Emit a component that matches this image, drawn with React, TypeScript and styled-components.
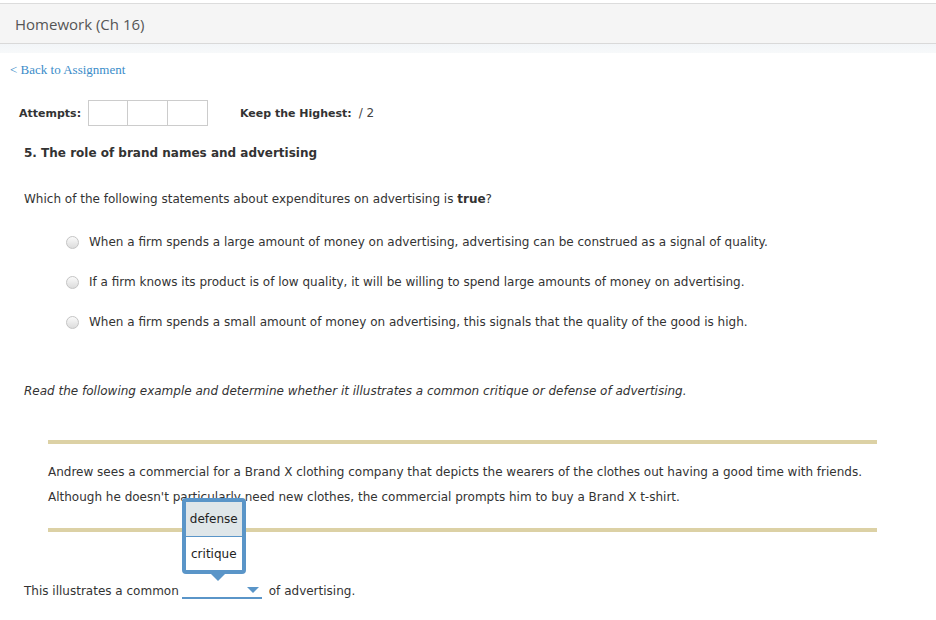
import React from "react";
import styled, { createGlobalStyle } from "styled-components";

const GlobalStyle = createGlobalStyle`
  body {
    margin: 0;
    background: #fff;
    font-family: "DejaVu Sans", Verdana, sans-serif;
    color: #333;
  }
`;

const Header = styled.div`
  margin-top: 3px;
  height: 39px;
  display: flex;
  align-items: center;
  padding-left: 15px;
  background: #f5f5f5;
  border-top: 1px solid #dcdcdc;
  border-bottom: 1px solid #d9d9d9;
  font-family: "Open Sans", sans-serif;
  font-size: 15px;
  color: #555;
`;

const HeaderShadow = styled.div`
  height: 9px;
  background: linear-gradient(180deg, #f2f5f8 0%, #f7f9fa 100%);
`;

const BackLink = styled.a`
  display: block;
  width: fit-content;
  margin: 9px 0 0 10px;
  font-family: "Liberation Serif", "DejaVu Serif", serif;
  font-size: 13px;
  line-height: 16px;
  color: #3a8cc9;
  text-decoration: none;
`;

const AttemptsRow = styled.div`
  display: flex;
  align-items: center;
  margin: 22px 0 0 19px;
  font-size: 12px;
  height: 26px;
`;

const Label = styled.span`
  font-weight: bold;
  font-size: 11px;
  margin-right: 7px;
`;

const Boxes = styled.div`
  display: flex;
  margin-right: 32px;
`;

const Box = styled.div`
  width: 38px;
  height: 24px;
  border: 1px solid #cccccc;
  & + & {
    border-left: none;
    width: 39px;
  }
`;

const Score = styled.span`
  color: #444;
`;

const Content = styled.div`
  width: 877px;
  padding-left: 24px;
  font-size: 12px;
  line-height: 16px;
`;

const Title = styled.div`
  margin-top: 19px;
  font-weight: bold;
  font-size: 12px;
`;

const Question = styled.p`
  margin: 30px 0 0;
`;

const Options = styled.div`
  margin-top: 27px;
  padding-left: 42px;
  display: flex;
  flex-direction: column;
  gap: 24px;
`;

const Option = styled.label`
  display: flex;
  align-items: center;
  gap: 10px;
`;

const Radio = styled.span`
  width: 11px;
  height: 11px;
  border-radius: 50%;
  border: 1px solid #c4c4c4;
  background: linear-gradient(180deg, #fafafa 0%, #dcdcdc 100%);
  flex-shrink: 0;
`;

const Instruction = styled.p`
  margin: 53px 0 0;
  font-style: italic;
`;

const Quote = styled.div`
  margin: 41px 24px 0;
  border-top: 4px solid #dcd1a5;
  border-bottom: 4px solid #dcd1a5;
  padding: 16px 0 18px;
  line-height: 25px;
`;

const Answer = styled.div`
  margin-top: 49px;
  display: flex;
  align-items: flex-end;
  height: 18px;
`;

const Select = styled.span`
  position: relative;
  display: inline-block;
  width: 80px;
  height: 17px;
  margin: 0 7px 0 3px;
  border-bottom: 2px solid #5a95c8;
`;

const Caret = styled.span`
  position: absolute;
  right: 3px;
  top: 7px;
  width: 0;
  height: 0;
  border-left: 6px solid transparent;
  border-right: 6px solid transparent;
  border-top: 6px solid #5a95c8;
`;

const Popup = styled.div`
  position: absolute;
  left: 0;
  bottom: 23px;
  width: 64px;
  box-sizing: border-box;
  border: 4px solid #5a95c8;
  border-radius: 4px;
  background: #fff;
  &::after {
    content: "";
    position: absolute;
    left: 25px;
    bottom: -11px;
    border-left: 7px solid transparent;
    border-right: 7px solid transparent;
    border-top: 7px solid #5a95c8;
  }
`;

const Item = styled.div<{ $active?: boolean }>`
  height: 34px;
  display: flex;
  align-items: center;
  justify-content: center;
  background: ${(p) => (p.$active ? "#dfe6e9" : "#fff")};
  color: #222;
  & + & {
    border-top: 1px solid #5a95c8;
    height: 33px;
  }
`;

const options = [
  "When a firm spends a large amount of money on advertising, advertising can be construed as a signal of quality.",
  "If a firm knows its product is of low quality, it will be willing to spend large amounts of money on advertising.",
  "When a firm spends a small amount of money on advertising, this signals that the quality of the good is high.",
];

export default function App() {
  return (
    <>
      <GlobalStyle />
      <Header>Homework (Ch 16)</Header>
      <HeaderShadow />
      <BackLink href="#">&lt; Back to Assignment</BackLink>
      <AttemptsRow>
        <Label>Attempts:</Label>
        <Boxes>
          <Box />
          <Box />
          <Box />
        </Boxes>
        <Label>Keep the Highest:</Label>
        <Score>/ 2</Score>
      </AttemptsRow>
      <Content>
        <Title>5. The role of brand names and advertising</Title>
        <Question>
          Which of the following statements about expenditures on advertising is <b>true</b>?
        </Question>
        <Options>
          {options.map((o) => (
            <Option key={o}>
              <Radio />
              {o}
            </Option>
          ))}
        </Options>
        <Instruction>
          Read the following example and determine whether it illustrates a common critique or defense of advertising.
        </Instruction>
        <Quote>
          Andrew sees a commercial for a Brand X clothing company that depicts the wearers of the clothes out having a good time with friends.
          <br />
          Although he doesn't particularly need new clothes, the commercial prompts him to buy a Brand X t-shirt.
        </Quote>
        <Answer>
          This illustrates a common
          <Select>
            <Caret />
            <Popup>
              <Item $active>defense</Item>
              <Item>critique</Item>
            </Popup>
          </Select>
          of advertising.
        </Answer>
      </Content>
    </>
  );
}
